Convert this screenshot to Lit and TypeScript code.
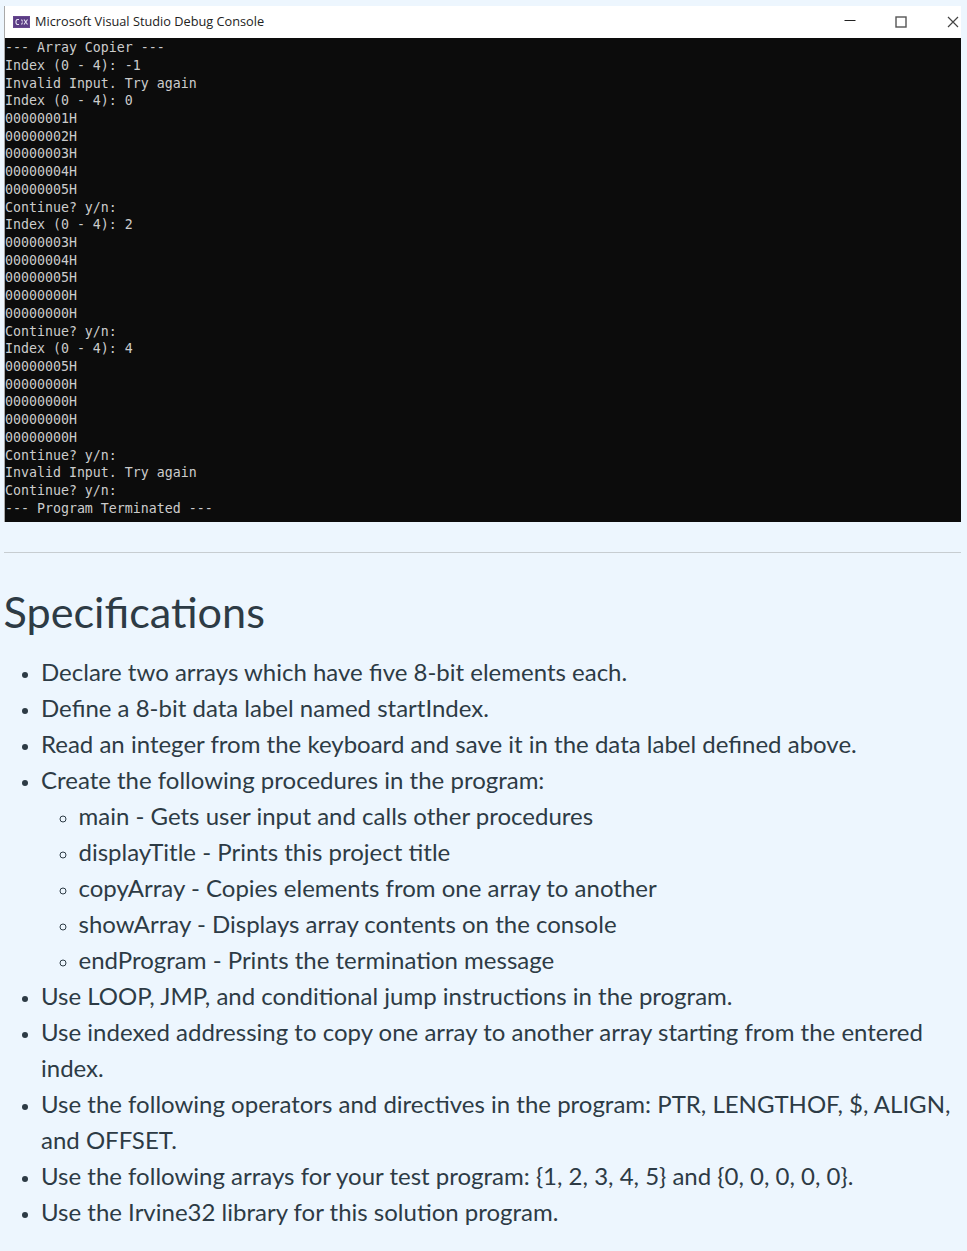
import { LitElement, html, css } from "lit";
import { customElement } from "lit/decorators.js";

const output = `--- Array Copier ---
Index (0 - 4): -1
Invalid Input. Try again
Index (0 - 4): 0
00000001H
00000002H
00000003H
00000004H
00000005H
Continue? y/n:
Index (0 - 4): 2
00000003H
00000004H
00000005H
00000000H
00000000H
Continue? y/n:
Index (0 - 4): 4
00000005H
00000000H
00000000H
00000000H
00000000H
Continue? y/n:
Invalid Input. Try again
Continue? y/n:
--- Program Terminated ---`.split("\n");

@customElement("app-root")
export class AppRoot extends LitElement {
  static styles = css`
    :host { display: block; height: 1251px; overflow: hidden; background: #edf6fe; color: #2d3b45; font-family: Lato, sans-serif; }
    .page { padding: 6px 6px 0 4px; }
    .window { background: #fff; border-left: 1px solid #a9a9a9; }
    .titlebar { height: 32px; display: flex; align-items: center; font: 12.75px "Open Sans", "Noto Sans", sans-serif; color: #222; padding-left: 8px; }
    .app-icon { width: 17px; height: 12px; margin-right: 5px; margin-bottom: 1px; flex: none; }
    .title { flex: 1; padding-bottom: 2px; }
    .controls { display: flex; align-items: center; }
    .ctl { height: 32px; display: flex; align-items: center; }
    .ctl svg { width: 12px; height: 12px; }
    .ctl.min { width: 51px; }
    .ctl.max { width: 52px; }
    .ctl.close { width: 14px; }
    .console { background: #0c0c0c; color: #cccccc; height: 484px; padding-top: 1.1px; box-sizing: border-box; font: 13.28px/17.73px "DejaVu Sans Mono", monospace; }
    .console div { white-space: pre; height: 17.73px; }
    hr { border: 0; border-top: 1px solid #c7cdd1; margin: 30px 0 0; }
    h2 { font-size: 43.2px; font-weight: 400; line-height: 52px; margin: 32px 0 0 -0.5px; }
    ul { margin: 0; padding: 0 0 0 37px; font-size: 24px; line-height: 36px; }
    .top { margin-top: 17px; }
    ul ul { padding-left: 37.5px; list-style: circle; }
    li::marker { font-size: 19px; }
  `;

  render() {
    return html`
      <div class="page">
        <div class="window">
          <div class="titlebar">
            <svg class="app-icon" viewBox="0 0 17 12">
              <rect width="17" height="12" fill="#68478f" />
              <rect x="1" y="1" width="15" height="10" fill="#5b3d85" />
              <path d="M6 3.5H4L3 5v2l1 1.5h2M8.5 3.5l1 2M8.5 8.5l1-2" fill="none" stroke="#e6e0f0" stroke-width="1.1" />
              <path d="M11 3.5l3.5 5M14.5 3.5l-3.5 5" fill="none" stroke="#e6e0f0" stroke-width="1.1" />
            </svg>
            <span class="title">Microsoft Visual Studio Debug Console</span>
            <div class="controls">
              <div class="ctl min"><svg viewBox="0 0 12 12"><path d="M0.5 4.5h11" stroke="#222" stroke-width="1" fill="none" /></svg></div>
              <div class="ctl max"><svg viewBox="0 0 12 12"><rect x="1" y="1" width="10" height="10" fill="none" stroke="#555" stroke-width="1.4" /></svg></div>
              <div class="ctl close"><svg viewBox="0 0 12 12"><path d="M1 1l10 10M11 1L1 11" stroke="#444" stroke-width="1.2" fill="none" /></svg></div>
            </div>
          </div>
          <div class="console">${output.map((l) => html`<div>${l}</div>`)}</div>
        </div>
        <hr />
        <h2>Specifications</h2>
        <ul class="top">
          <li>Declare two arrays which have five 8-bit elements each.</li>
          <li>Define a 8-bit data label named startIndex.</li>
          <li>Read an integer from the keyboard and save it in the data label defined above.</li>
          <li>Create the following procedures in the program:
            <ul>
              <li>main - Gets user input and calls other procedures</li>
              <li>displayTitle - Prints this project title</li>
              <li>copyArray - Copies elements from one array to another</li>
              <li>showArray - Displays array contents on the console</li>
              <li>endProgram - Prints the termination message</li>
            </ul>
          </li>
          <li>Use LOOP, JMP, and conditional jump instructions in the program.</li>
          <li>Use indexed addressing to copy one array to another array starting from the entered index.</li>
          <li>Use the following operators and directives in the program: PTR, LENGTHOF, $, ALIGN, and OFFSET.</li>
          <li>Use the following arrays for your test program: {1, 2, 3, 4, 5} and {0, 0, 0, 0, 0}.</li>
          <li>Use the Irvine32 library for this solution program.</li>
        </ul>
      </div>
    `;
  }
}
